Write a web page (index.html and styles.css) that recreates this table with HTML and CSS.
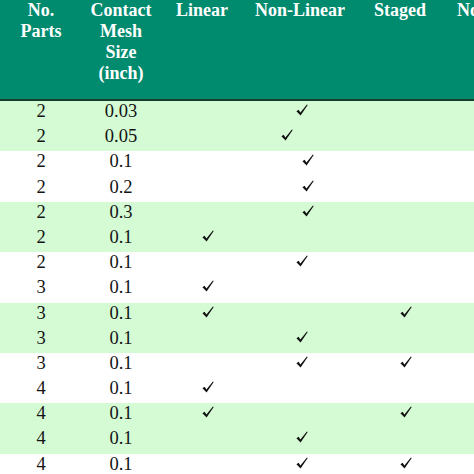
FILE: index.html
```html
<!DOCTYPE html>
<html>
<head>
<meta charset="utf-8">
<link rel="stylesheet" href="styles.css">
</head>
<body>
<div class="table">
  <div class="head">
    <div class="hc">No.<br>Parts</div>
    <div class="hc">Contact<br>Mesh<br>Size<br>(inch)</div>
    <div class="hc">Linear</div>
    <div class="hc">Non-Linear</div>
    <div class="hc">Staged</div>
    <div class="hc">Non-Staged</div>
  </div>
  <div class="band g">
    <div class="row"><div class="c">2</div><div class="c">0.03</div><div class="c"></div><div class="c"><span class="ck r1"><svg viewBox="0 0 12 12"><path d="M0.4 7.2 L2.6 5.8 L4.4 8.4 L10.9 0.4 L11.7 1.1 L4.6 11.6 Z"/></svg></span></div><div class="c"></div><div class="c"></div></div>
    <div class="row"><div class="c">2</div><div class="c">0.05</div><div class="c"></div><div class="c"><span class="ck nl-left"><svg viewBox="0 0 12 12"><path d="M0.4 7.2 L2.6 5.8 L4.4 8.4 L10.9 0.4 L11.7 1.1 L4.6 11.6 Z"/></svg></span></div><div class="c"></div><div class="c"></div></div>
  </div>
  <div class="band">
    <div class="row"><div class="c">2</div><div class="c">0.1</div><div class="c"></div><div class="c"><span class="ck nl-right"><svg viewBox="0 0 12 12"><path d="M0.4 7.2 L2.6 5.8 L4.4 8.4 L10.9 0.4 L11.7 1.1 L4.6 11.6 Z"/></svg></span></div><div class="c"></div><div class="c"></div></div>
    <div class="row"><div class="c">2</div><div class="c">0.2</div><div class="c"></div><div class="c"><span class="ck nl-right"><svg viewBox="0 0 12 12"><path d="M0.4 7.2 L2.6 5.8 L4.4 8.4 L10.9 0.4 L11.7 1.1 L4.6 11.6 Z"/></svg></span></div><div class="c"></div><div class="c"></div></div>
  </div>
  <div class="band g">
    <div class="row"><div class="c">2</div><div class="c">0.3</div><div class="c"></div><div class="c"><span class="ck nl-right"><svg viewBox="0 0 12 12"><path d="M0.4 7.2 L2.6 5.8 L4.4 8.4 L10.9 0.4 L11.7 1.1 L4.6 11.6 Z"/></svg></span></div><div class="c"></div><div class="c"></div></div>
    <div class="row"><div class="c">2</div><div class="c">0.1</div><div class="c"><span class="ck lin"><svg viewBox="0 0 12 12"><path d="M0.4 7.2 L2.6 5.8 L4.4 8.4 L10.9 0.4 L11.7 1.1 L4.6 11.6 Z"/></svg></span></div><div class="c"></div><div class="c"></div><div class="c"></div></div>
  </div>
  <div class="band">
    <div class="row"><div class="c">2</div><div class="c">0.1</div><div class="c"></div><div class="c"><span class="ck r1"><svg viewBox="0 0 12 12"><path d="M0.4 7.2 L2.6 5.8 L4.4 8.4 L10.9 0.4 L11.7 1.1 L4.6 11.6 Z"/></svg></span></div><div class="c"></div><div class="c"></div></div>
    <div class="row"><div class="c">3</div><div class="c">0.1</div><div class="c"><span class="ck lin"><svg viewBox="0 0 12 12"><path d="M0.4 7.2 L2.6 5.8 L4.4 8.4 L10.9 0.4 L11.7 1.1 L4.6 11.6 Z"/></svg></span></div><div class="c"></div><div class="c"></div><div class="c"></div></div>
  </div>
  <div class="band g">
    <div class="row"><div class="c">3</div><div class="c">0.1</div><div class="c"><span class="ck lin"><svg viewBox="0 0 12 12"><path d="M0.4 7.2 L2.6 5.8 L4.4 8.4 L10.9 0.4 L11.7 1.1 L4.6 11.6 Z"/></svg></span></div><div class="c"></div><div class="c"><span class="ck stg"><svg viewBox="0 0 12 12"><path d="M0.4 7.2 L2.6 5.8 L4.4 8.4 L10.9 0.4 L11.7 1.1 L4.6 11.6 Z"/></svg></span></div><div class="c"></div></div>
    <div class="row"><div class="c">3</div><div class="c">0.1</div><div class="c"></div><div class="c"><span class="ck r1"><svg viewBox="0 0 12 12"><path d="M0.4 7.2 L2.6 5.8 L4.4 8.4 L10.9 0.4 L11.7 1.1 L4.6 11.6 Z"/></svg></span></div><div class="c"></div><div class="c"></div></div>
  </div>
  <div class="band">
    <div class="row"><div class="c">3</div><div class="c">0.1</div><div class="c"></div><div class="c"><span class="ck r1"><svg viewBox="0 0 12 12"><path d="M0.4 7.2 L2.6 5.8 L4.4 8.4 L10.9 0.4 L11.7 1.1 L4.6 11.6 Z"/></svg></span></div><div class="c"><span class="ck stg"><svg viewBox="0 0 12 12"><path d="M0.4 7.2 L2.6 5.8 L4.4 8.4 L10.9 0.4 L11.7 1.1 L4.6 11.6 Z"/></svg></span></div><div class="c"></div></div>
    <div class="row"><div class="c">4</div><div class="c">0.1</div><div class="c"><span class="ck lin"><svg viewBox="0 0 12 12"><path d="M0.4 7.2 L2.6 5.8 L4.4 8.4 L10.9 0.4 L11.7 1.1 L4.6 11.6 Z"/></svg></span></div><div class="c"></div><div class="c"></div><div class="c"></div></div>
  </div>
  <div class="band g">
    <div class="row"><div class="c">4</div><div class="c">0.1</div><div class="c"><span class="ck lin"><svg viewBox="0 0 12 12"><path d="M0.4 7.2 L2.6 5.8 L4.4 8.4 L10.9 0.4 L11.7 1.1 L4.6 11.6 Z"/></svg></span></div><div class="c"></div><div class="c"><span class="ck stg"><svg viewBox="0 0 12 12"><path d="M0.4 7.2 L2.6 5.8 L4.4 8.4 L10.9 0.4 L11.7 1.1 L4.6 11.6 Z"/></svg></span></div><div class="c"></div></div>
    <div class="row"><div class="c">4</div><div class="c">0.1</div><div class="c"></div><div class="c"><span class="ck r1"><svg viewBox="0 0 12 12"><path d="M0.4 7.2 L2.6 5.8 L4.4 8.4 L10.9 0.4 L11.7 1.1 L4.6 11.6 Z"/></svg></span></div><div class="c"></div><div class="c"></div></div>
  </div>
  <div class="band">
    <div class="row"><div class="c">4</div><div class="c">0.1</div><div class="c"></div><div class="c"><span class="ck r1"><svg viewBox="0 0 12 12"><path d="M0.4 7.2 L2.6 5.8 L4.4 8.4 L10.9 0.4 L11.7 1.1 L4.6 11.6 Z"/></svg></span></div><div class="c"><span class="ck stg"><svg viewBox="0 0 12 12"><path d="M0.4 7.2 L2.6 5.8 L4.4 8.4 L10.9 0.4 L11.7 1.1 L4.6 11.6 Z"/></svg></span></div><div class="c"></div></div>
    <div class="row"><div class="c">4</div><div class="c">0.1</div><div class="c"></div><div class="c"></div><div class="c"></div><div class="c"></div></div>
  </div>
</div>
</body>
</html>
```

FILE: styles.css
```css
html, body {
  margin: 0;
  padding: 0;
  background: #ffffff;
  overflow: hidden;
  width: 474px;
  height: 474px;
}

.table {
  width: 560px;
  font-family: "Liberation Serif", "Times New Roman", serif;
}

.head {
  display: grid;
  grid-template-columns: 82px 78px 84px 112px 88px 116px;
  height: 99px;
  background: #008a6e;
  border-bottom: 2px solid #143f2f;
}

.hc {
  color: #ffffff;
  font-weight: bold;
  font-size: 18px;
  line-height: 21px;
  text-align: center;
  white-space: nowrap;
}

.band {
  background: #ffffff;
}

.band.g {
  background: #d5fbd5;
}

.row {
  display: grid;
  grid-template-columns: 82px 78px 84px 112px 88px 116px;
  height: 25.2px;
}

.c {
  display: flex;
  justify-content: center;
  align-items: flex-start;
  font-size: 18.5px;
  line-height: 21px;
  color: #141414;
}

.ck {
  display: block;
  width: 12px;
  height: 12px;
  margin-top: 3px;
}

.ck svg {
  display: block;
  width: 12px;
  height: 12px;
  fill: #111111;
}

.r1 { margin-left: 4px; }
.nl-left { margin-right: 26px; }
.nl-right { margin-left: 16px; }
.lin { margin-left: 12px; }
.stg { margin-left: 12px; }
```
